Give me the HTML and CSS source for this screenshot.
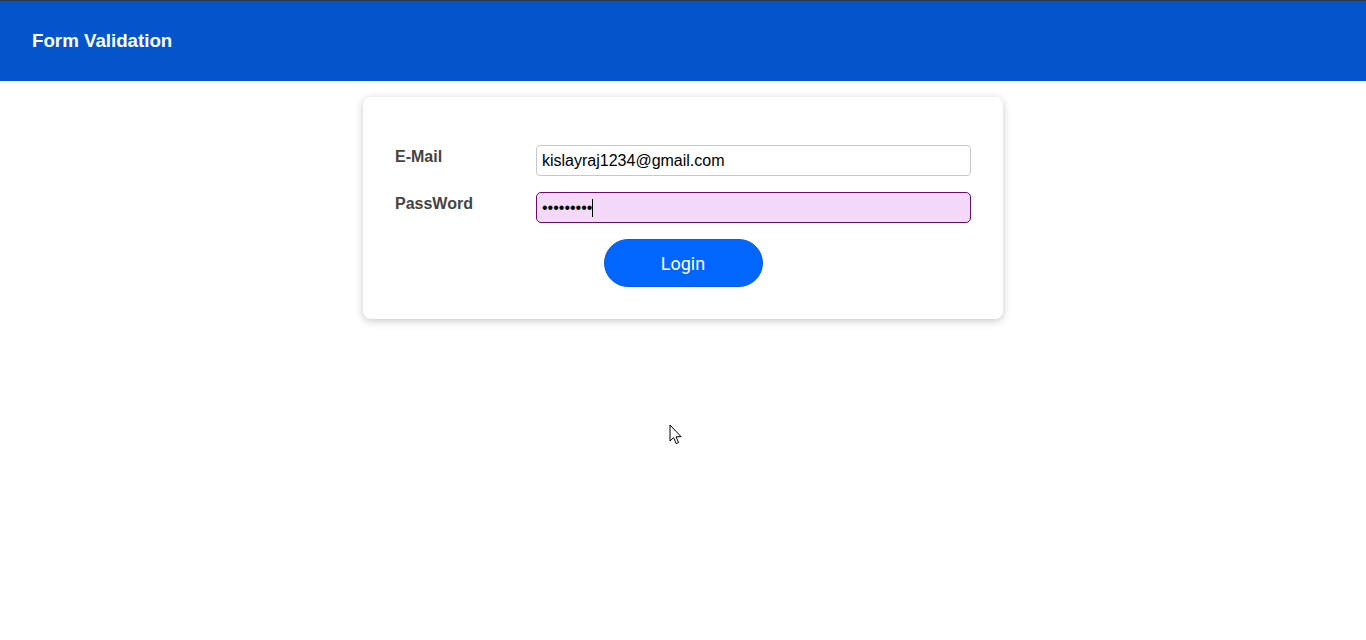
FILE: index.html
```html
<!DOCTYPE html>
<html>
<head>
<meta charset="utf-8">
<title>Form Validation</title>
<link rel="stylesheet" href="styles.css">
</head>
<body>
<header class="topbar">
  <h1 class="brand">Form Validation</h1>
</header>
<main class="page">
  <form class="card">
    <div class="grid">
      <label class="label" for="email">E-Mail</label>
      <input class="field" id="email" type="text" value="kislayraj1234@gmail.com">
      <label class="label" for="pwd">PassWord</label>
      <div class="field-wrap">
        <input class="field field-active" id="pwd" type="password" value="123456789">
        <span class="caret"></span>
      </div>
    </div>
    <div class="actions">
      <button class="btn" type="button">Login</button>
    </div>
  </form>
</main>
<svg class="pointer" width="14" height="21" viewBox="0 0 14 21"><path d="M1 1 L1 17 L4.6 13.6 L7.2 19.6 L9.6 18.6 L7 12.8 L12 12.6 Z" fill="#fff" stroke="#000" stroke-width="1" stroke-linejoin="round"/></svg>
</body>
</html>
```
FILE: styles.css
```css
* { box-sizing: border-box; }
html, body { margin: 0; padding: 0; background: #fff; }
body { font-family: "Liberation Sans", Arial, sans-serif; min-height: 640px; position: relative; }
.topbar {
  height: 81px;
  background: #0455cc;
  border-top: 1px solid #2d3a4d;
  display: flex;
  align-items: center;
  padding: 0 32px;
}
.brand { margin: 0; color: #fff; font-size: 18.72px; font-weight: 700; }
.page { display: flex; justify-content: center; padding-top: 16px; }
.card {
  width: 640px;
  background: #fff;
  border-radius: 8px;
  box-shadow: 0 2px 8px rgba(0,0,0,0.22);
  padding: 48px 32px 32px;
}
.grid {
  display: grid;
  grid-template-columns: 141px 435px;
  row-gap: 16px;
}
.label {
  color: #444;
  font-weight: 700;
  font-size: 16px;
  padding-top: 3px;
}
.field-wrap { position: relative; display: flex; }
.field-wrap .field { flex: 1; }
.field {
  height: 31px;
  border: 1px solid #c8c8c8;
  border-radius: 4px;
  padding: 0 5px;
  font-family: "Liberation Sans", Arial, sans-serif;
  font-size: 16px;
  color: #000;
  outline: none;
  background: #fff;
}
.field-active {
  background: #f5d9fa;
  border-color: #6b0a6e;
  border-radius: 5px;
}
.caret {
  position: absolute;
  left: 56px;
  top: 7px;
  width: 1px;
  height: 18px;
  background: #000;
}
.actions { display: flex; justify-content: center; padding-top: 16px; }
.btn {
  width: 159px;
  height: 48px;
  border: 1px solid #0a5fdc;
  border-radius: 24px;
  background: #0066ff;
  color: #fff;
  font-family: Roboto, "Liberation Sans", sans-serif;
  font-size: 18px;
  cursor: pointer;
}
.pointer { position: absolute; left: 669px; top: 424px; }
```
